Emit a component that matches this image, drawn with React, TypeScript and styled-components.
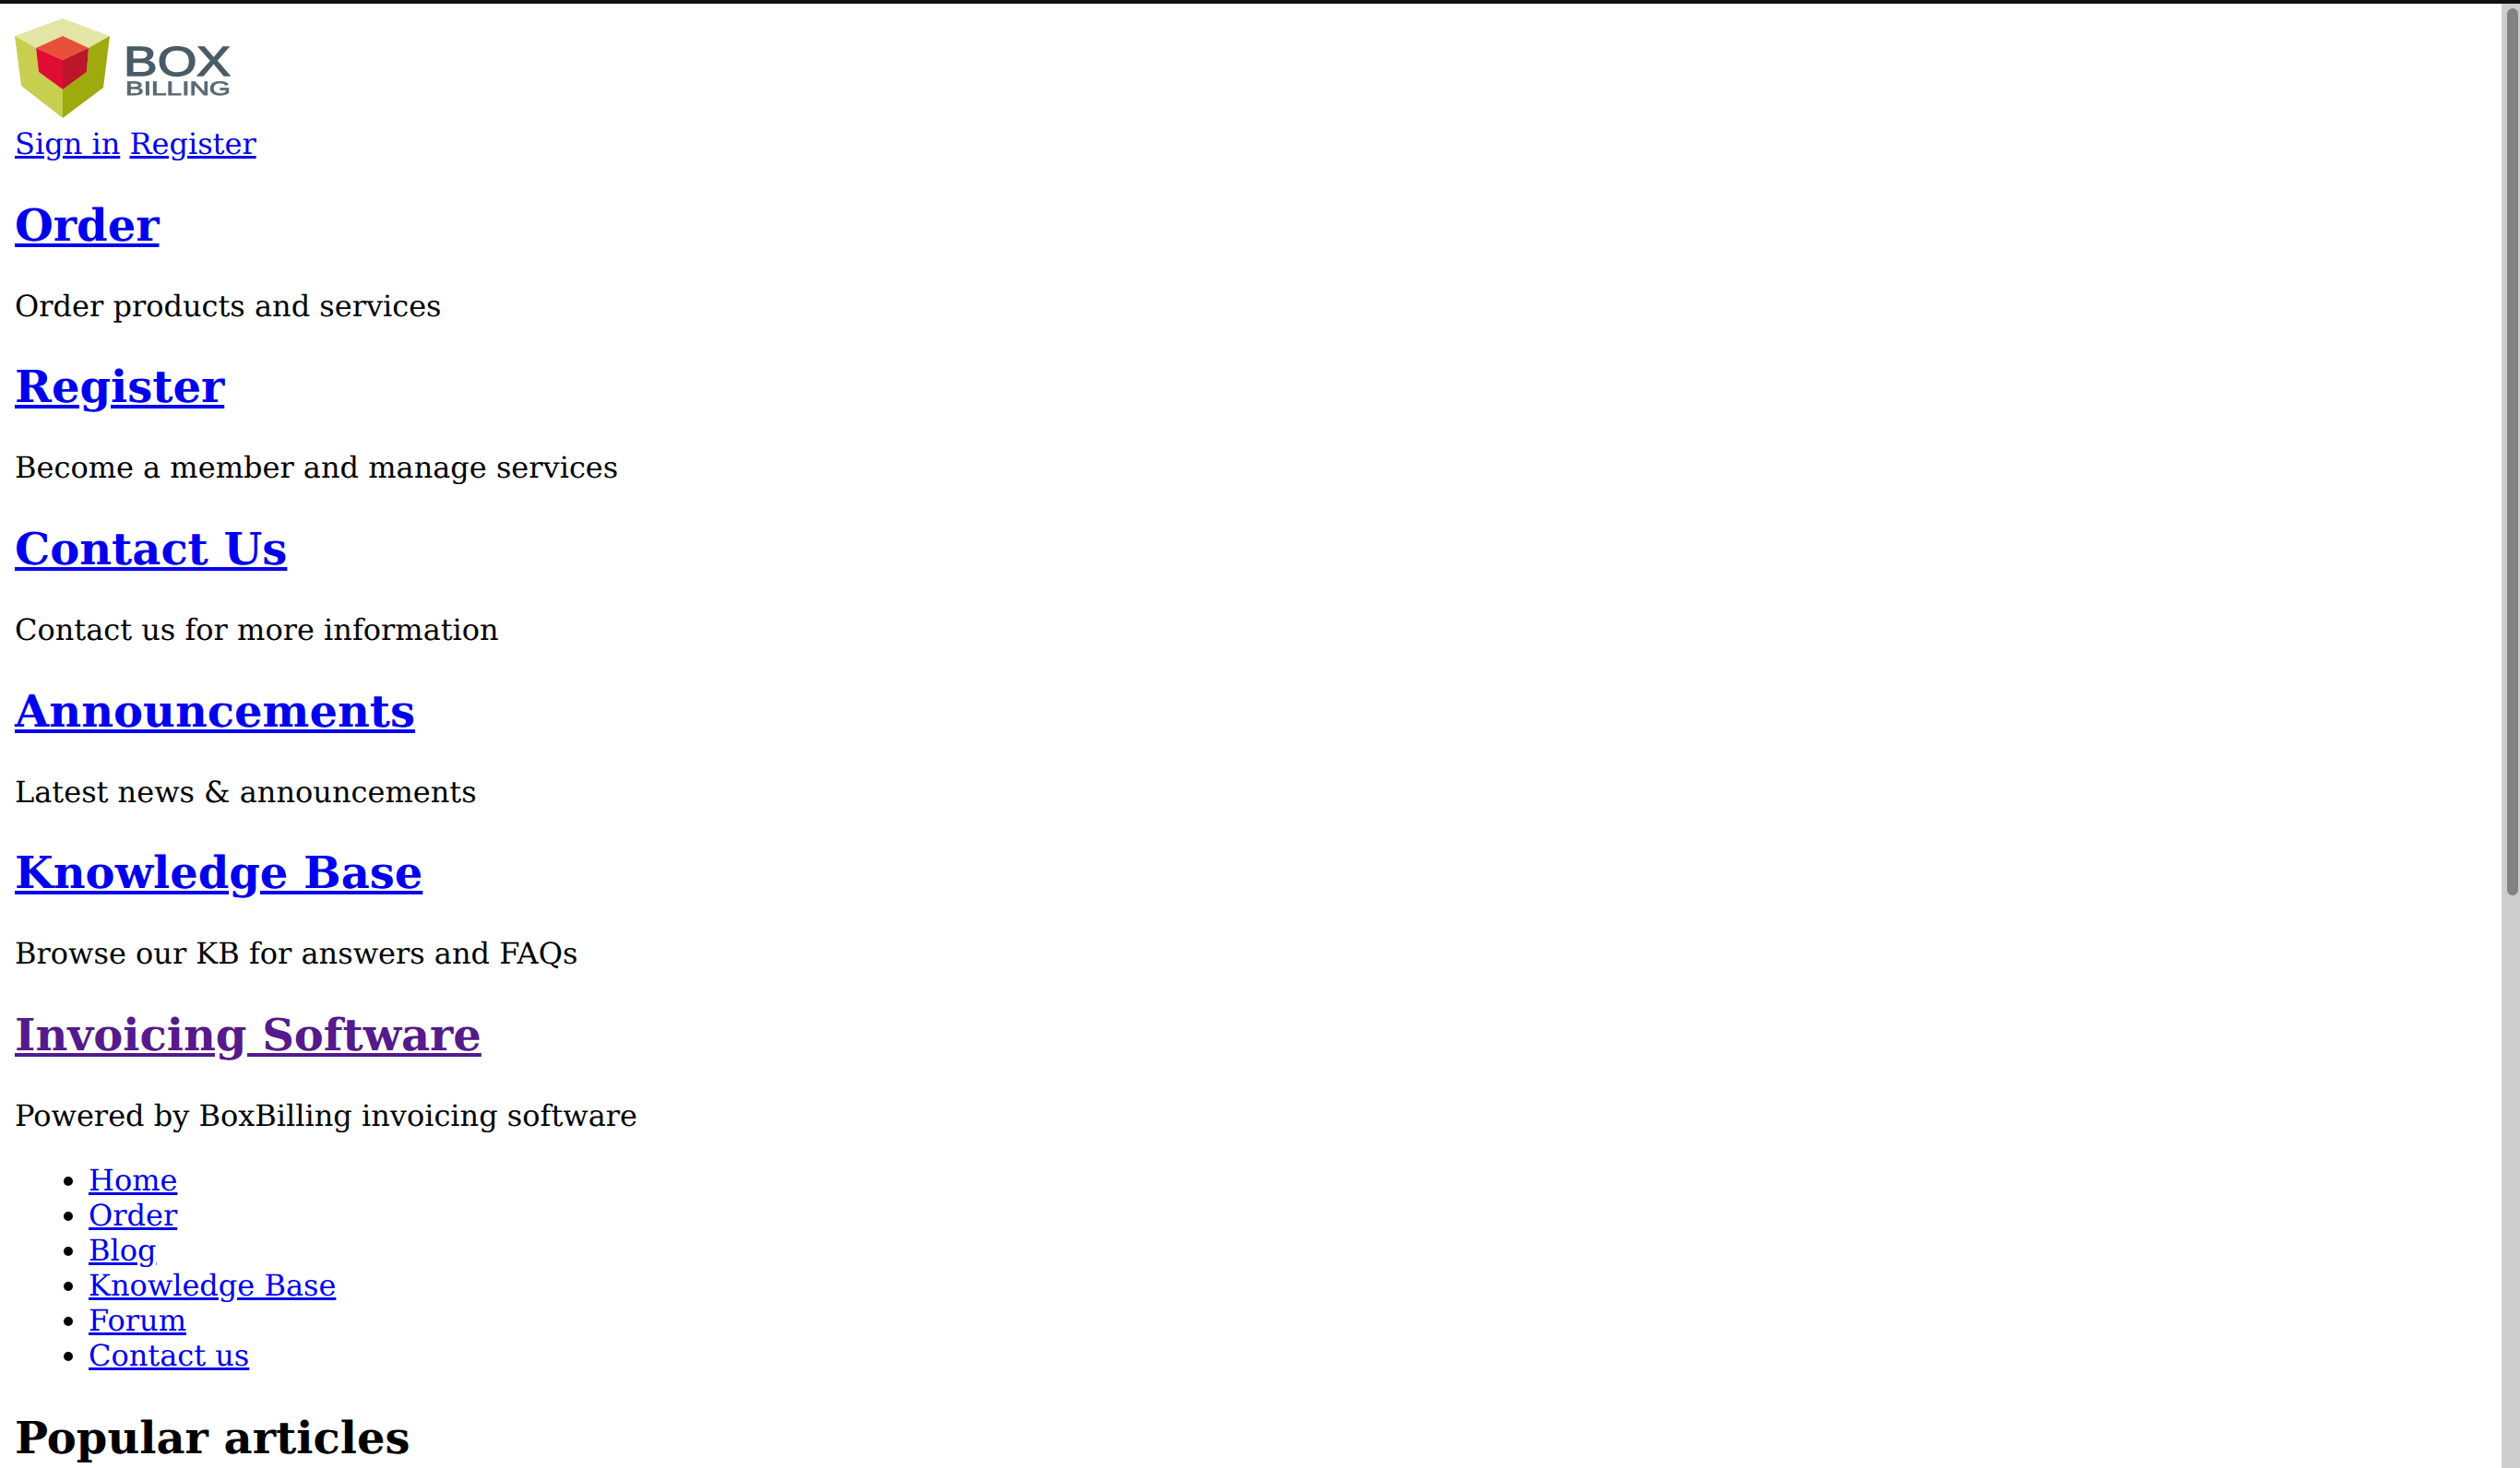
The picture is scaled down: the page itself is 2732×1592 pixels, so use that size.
import React from "react";
import styled, { createGlobalStyle } from "styled-components";

const GlobalStyle = createGlobalStyle`
  html, body {
    margin: 0;
    height: 100%;
    overflow: hidden;
    background: #fff;
  }
  body {
    font-family: "DejaVu Serif", serif;
    font-size: 32px;
    color: #000;
    text-rendering: geometricPrecision;
  }
`;

const TopBar = styled.div`
  height: 4px;
  background: #111;
`;

const Frame = styled.div`
  display: flex;
  height: 1588px;
`;

const Page = styled.main`
  flex: 1;
  min-width: 0;
  overflow: hidden;
  padding: 12px 16px 0;
`;

// page scrollbar as it appears in the shot
const ScrollTrack = styled.div`
  width: 20px;
  background: #cdcdcd;
  padding: 5px 2px 0 6px;
  box-sizing: border-box;
`;

const ScrollThumb = styled.div`
  height: 962px;
  border-radius: 6px;
  background: #7f8383;
`;

const LogoLink = styled.a`
  display: block;
  height: 121px;
`;

const LogoMark = styled.svg`
  display: block;
  width: 240px;
  height: 114px;
`;

const AuthRow = styled.div`
  line-height: 38px;
`;

const Link = styled.a<{ $visited?: boolean }>`
  color: ${(p) => (p.$visited ? "#551a8b" : "#0000ee")};
  text-decoration: underline;
`;

const Feature = styled.section`
  margin: 41.84px 0 32px;
`;

const FeatureTitle = styled.h2`
  margin: 0 0 39.84px;
  font-size: 48px;
  line-height: 56px;
  font-weight: 700;
`;

const FeatureText = styled.p`
  margin: 0;
  line-height: 38px;
`;

const Nav = styled.ul`
  margin: 0;
  padding: 0 0 0 80px;
  list-style: disc;
`;

const NavItem = styled.li`
  line-height: 38px;
`;

const SectionTitle = styled.h2`
  margin: 43px 0 0;
  font-size: 48px;
  line-height: 56px;
  font-weight: 700;
`;

const features = [
  { title: "Order", text: "Order products and services" },
  { title: "Register", text: "Become a member and manage services" },
  { title: "Contact Us", text: "Contact us for more information" },
  { title: "Announcements", text: "Latest news & announcements" },
  { title: "Knowledge Base", text: "Browse our KB for answers and FAQs" },
  { title: "Invoicing Software", text: "Powered by BoxBilling invoicing software", visited: true },
];

const navLinks = ["Home", "Order", "Blog", "Knowledge Base", "Forum", "Contact us"];

const Logo = () => (
  <LogoMark viewBox="16 16 240 114">
    <defs>
      <filter id="soft" x="-5%" y="-5%" width="110%" height="110%">
        <feGaussianBlur stdDeviation="0.7" />
      </filter>
    </defs>
    <g filter="url(#soft)">
      <polygon points="16,39 68,20 119,39 96,52 68,39 39,52" fill="#e3e6a4" />
      <polygon points="16,39 39,52 42,78 68,97 68,128 23,93" fill="#c8cf50" />
      <polygon points="119,39 96,52 94,78 68,97 68,128 112,95" fill="#9eaa0e" />
      <polygon points="68,39 96,52 68,65 39,52" fill="#e8503a" />
      <polygon points="39,52 68,65 68,97 42,78" fill="#e01030" />
      <polygon points="96,52 94,78 68,97 68,65" fill="#bc122c" />
      <text
        x="134"
        y="81.5"
        textLength="116"
        lengthAdjust="spacingAndGlyphs"
        fontFamily="'Liberation Sans', sans-serif"
        fontSize="45"
        fill="#4a5c66"
        stroke="#4a5c66"
        strokeWidth="1.4"
      >
        BOX
      </text>
      <text
        x="136"
        y="102.5"
        textLength="114"
        lengthAdjust="spacingAndGlyphs"
        fontFamily="'Liberation Sans', sans-serif"
        fontSize="21"
        fill="#5a6a72"
        stroke="#5a6a72"
        strokeWidth="0.8"
      >
        BILLING
      </text>
    </g>
  </LogoMark>
);

const App = () => {
  return (
    <>
      <GlobalStyle />
      <TopBar />
      <Frame>
        <Page>
          <LogoLink href="#">
            <Logo />
          </LogoLink>
          <AuthRow>
            <Link href="#">Sign in</Link> <Link href="#">Register</Link>
          </AuthRow>
          {features.map((f) => (
            <Feature key={f.title}>
              <FeatureTitle>
                <Link href="#" $visited={f.visited}>
                  {f.title}
                </Link>
              </FeatureTitle>
              <FeatureText>{f.text}</FeatureText>
            </Feature>
          ))}
          <Nav>
            {navLinks.map((label) => (
              <NavItem key={label}>
                <Link href="#">{label}</Link>
              </NavItem>
            ))}
          </Nav>
          <SectionTitle>Popular articles</SectionTitle>
        </Page>
        <ScrollTrack>
          <ScrollThumb />
        </ScrollTrack>
      </Frame>
    </>
  );
};

export default App;
